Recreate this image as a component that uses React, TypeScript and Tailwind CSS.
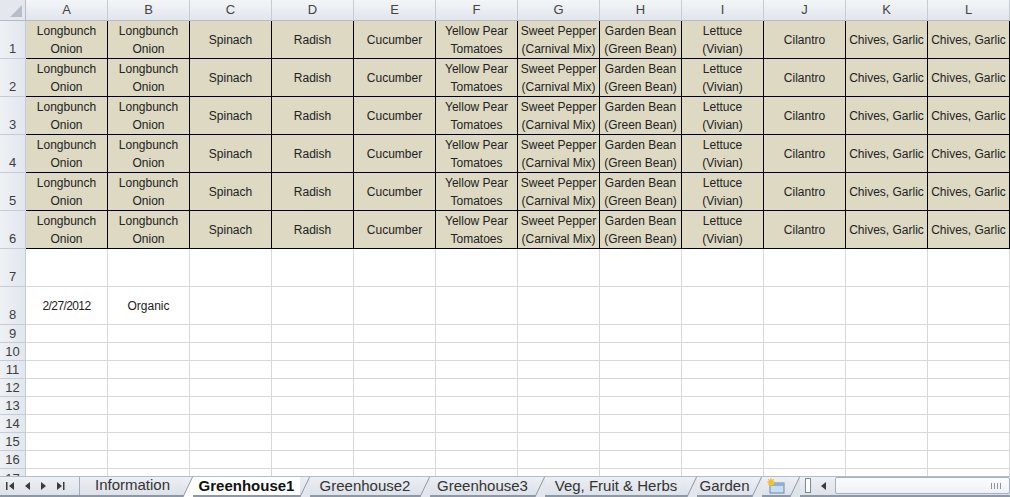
import React from "react";

const COLS = ["A", "B", "C", "D", "E", "F", "G", "H", "I", "J", "K", "L"];
const CROPS = [
  ["Longbunch", "Onion"],
  ["Longbunch", "Onion"],
  ["Spinach"],
  ["Radish"],
  ["Cucumber"],
  ["Yellow Pear", "Tomatoes"],
  ["Sweet Pepper", "(Carnival Mix)"],
  ["Garden Bean", "(Green Bean)"],
  ["Lettuce", "(Vivian)"],
  ["Cilantro"],
  ["Chives, Garlic"],
  ["Chives, Garlic"],
];

function RowHeader({ n, h }: { n: number; h: string }) {
  return (
    <div
      className={`w-[26px] shrink-0 border-r border-b border-[#c5ccd6] bg-gradient-to-r from-[#eef1f5] to-[#e2e7ee] flex justify-center items-end pb-[1px] text-[13px] text-[#3d3d3d] leading-[16px] ${h}`}
    >
      {n}
    </div>
  );
}

function TanCell({ lines }: { lines: string[] }) {
  return (
    <div className="w-[82px] h-[38px] shrink-0 border-r border-b border-black bg-[#ddd9c3] flex flex-col items-center justify-center text-[12px] leading-[18px] text-[#222] whitespace-nowrap overflow-hidden">
      {lines.map((l, i) => (
        <span key={i}>{l}</span>
      ))}
    </div>
  );
}

function Cell({ h, children }: { h: string; children?: React.ReactNode }) {
  return (
    <div
      className={`w-[82px] shrink-0 border-r border-b border-[#d8d8d8] bg-white flex items-center justify-center text-[12px] text-[#222] whitespace-nowrap overflow-hidden ${h}`}
    >
      {children}
    </div>
  );
}

function Slant({ fill }: { fill: string }) {
  return (
    <svg width="10" height="21" viewBox="0 0 10 21" className="shrink-0 block">
      <polygon points="0,21 10,0 10,21" fill={fill} />
      <line x1="0" y1="21" x2="10" y2="0" stroke="#8e99a8" strokeWidth="1" />
    </svg>
  );
}

function Tab({ label, w, active }: { label: string; w: string; active?: boolean }) {
  return (
    <div className={`flex shrink-0 h-full ${w}`}>
      <Slant fill={active ? "#ffffff" : "#e3e7ed"} />
      <div
        className={`flex-1 flex items-center justify-center text-[15px] leading-none whitespace-nowrap ${
          active ? "bg-white font-bold text-[#111]" : "text-[#333] bg-gradient-to-b from-[#eceff3] to-[#dde2e9]"
        }`}
      >
        {label}
      </div>
    </div>
  );
}

export default function App() {
  const font = { fontFamily: '"Liberation Sans", Arial, sans-serif' };
  return (
    <div className="w-[1010px] h-[497px] overflow-hidden bg-white flex flex-col" style={font}>
      {/* Column headers */}
      <div className="flex h-[21px] shrink-0">
        <div className="w-[26px] h-[21px] shrink-0 border-r border-b border-[#b5bcc6] bg-[#e4e8ee] flex items-end justify-end p-[3px]">
          <svg width="12" height="12" viewBox="0 0 12 12">
            <polygon points="12,0 12,12 0,12" fill="#b7bec8" />
          </svg>
        </div>
        {COLS.map((c) => (
          <div
            key={c}
            className="w-[82px] h-[21px] shrink-0 border-r border-b border-[#c5ccd6] border-b-[#b5bcc6] bg-gradient-to-b from-[#f3f5f8] to-[#e1e6ec] flex items-center justify-center text-[13px] text-[#444]"
          >
            {c}
          </div>
        ))}
      </div>

      {/* Rows 1-6 */}
      {[1, 2, 3, 4, 5, 6].map((r) => (
        <div key={r} className="flex shrink-0">
          <RowHeader n={r} h="h-[38px]" />
          {CROPS.map((lines, i) => (
            <TanCell key={i} lines={lines} />
          ))}
        </div>
      ))}

      {/* Row 7 */}
      <div className="flex shrink-0">
        <RowHeader n={7} h="h-[38px]" />
        {COLS.map((c) => (
          <Cell key={c} h="h-[38px]" />
        ))}
      </div>

      {/* Row 8 */}
      <div className="flex shrink-0">
        <RowHeader n={8} h="h-[38px]" />
        {COLS.map((c, i) => (
          <Cell key={c} h="h-[38px]">
            {i === 0 ? <span className="tracking-[-0.6px]">2/27/2012</span> : i === 1 ? "Organic" : null}
          </Cell>
        ))}
      </div>

      {/* Rows 9-16 */}
      {[9, 10, 11, 12, 13, 14, 15, 16].map((r) => (
        <div key={r} className="flex shrink-0">
          <div className="w-[26px] h-[18px] shrink-0 border-r border-b border-[#c5ccd6] bg-gradient-to-r from-[#eef1f5] to-[#e2e7ee] flex items-center justify-center text-[13px] text-[#3d3d3d] leading-none">
            {r}
          </div>
          {COLS.map((c) => (
            <Cell key={c} h="h-[18px]" />
          ))}
        </div>
      ))}

      {/* Row 17 partial (cut off by the tab bar, as in Excel) */}
      <div className="flex shrink-0 h-[7px] overflow-hidden">
        <div className="w-[26px] h-[18px] shrink-0 border-r border-[#c5ccd6] bg-gradient-to-r from-[#eef1f5] to-[#e2e7ee] flex items-center justify-center text-[13px] text-[#3d3d3d] leading-none">
          17
        </div>
        {COLS.map((c) => (
          <div key={c} className="w-[82px] h-[18px] shrink-0 border-r border-[#d8d8d8] bg-white" />
        ))}
      </div>

      {/* Sheet tab bar */}
      <div className="flex h-[21px] shrink-0 bg-gradient-to-b from-[#eef1f5] to-[#dde2e9] border-b-[2px] border-[#8d98a6] relative">
        <div className="absolute left-0 right-0 top-0 h-px bg-[#b3bcc7]" />
        <div className="w-[80px] shrink-0 flex items-center border-r border-[#a4adba] pl-[6px] gap-[9px]">
          <svg width="9" height="10" viewBox="0 0 9 10">
            <rect x="0" y="1" width="1.5" height="8" fill="#3a3a3a" />
            <polygon points="8,1 8,9 3,5" fill="#3a3a3a" />
          </svg>
          <svg width="7" height="10" viewBox="0 0 7 10">
            <polygon points="6,1 6,9 1,5" fill="#3a3a3a" />
          </svg>
          <svg width="7" height="10" viewBox="0 0 7 10">
            <polygon points="1,1 1,9 6,5" fill="#3a3a3a" />
          </svg>
          <svg width="9" height="10" viewBox="0 0 9 10">
            <polygon points="1,1 1,9 6,5" fill="#3a3a3a" />
            <rect x="7" y="1" width="1.5" height="8" fill="#3a3a3a" />
          </svg>
        </div>
        <div className="w-[103px] shrink-0 flex items-center justify-center text-[15px] text-[#333] bg-gradient-to-b from-[#eceff3] to-[#dde2e9] pl-[2px]">
          Information
        </div>
        <Tab label="Greenhouse1" w="w-[117px]" active />
        <Tab label="Greenhouse2" w="w-[120px]" />
        <Tab label="Greenhouse3" w="w-[115px]" />
        <Tab label="Veg, Fruit & Herbs" w="w-[152px]" />
        <Tab label="Garden" w="w-[65px]" />
        <div className="flex shrink-0 h-full w-[38px]">
          <Slant fill="#e3e7ed" />
          <div className="flex-1 flex items-center justify-center bg-gradient-to-b from-[#eceff3] to-[#dde2e9]">
            <svg width="20" height="16" viewBox="0 0 20 16">
              <rect x="4" y="5" width="14" height="10" fill="#c9dcf0" stroke="#6d87a8" strokeWidth="1" />
              <rect x="4" y="5" width="14" height="3" fill="#8fb1d8" />
              <circle cx="5" cy="4" r="3" fill="#f7d24a" />
              <path d="M5 0 L5 8 M1 4 L9 4 M2 1 L8 7 M8 1 L2 7" stroke="#f2b51d" strokeWidth="0.8" />
            </svg>
          </div>
        </div>
        <Slant fill="#dfe4ea" />
        <div className="flex-1 flex items-center">
          <div className="ml-[5px] w-[6px] h-[15px] border border-[#7d8896] bg-white" />
          <svg width="8" height="10" viewBox="0 0 8 10" className="ml-[9px]">
            <polygon points="6,1 6,9 1,5" fill="#3a3a3a" />
          </svg>
          <div className="ml-[7px] flex-1 h-[17px] border border-[#a6afbb] bg-gradient-to-b from-[#fbfcfd] to-[#eef1f4] rounded-[2px] flex items-center justify-end pr-[8px] gap-[2px]">
            <div className="w-px h-[6px] bg-[#8a94a2]" />
            <div className="w-px h-[6px] bg-[#8a94a2]" />
            <div className="w-px h-[6px] bg-[#8a94a2]" />
            <div className="w-px h-[6px] bg-[#8a94a2]" />
          </div>
        </div>
      </div>
    </div>
  );
}
